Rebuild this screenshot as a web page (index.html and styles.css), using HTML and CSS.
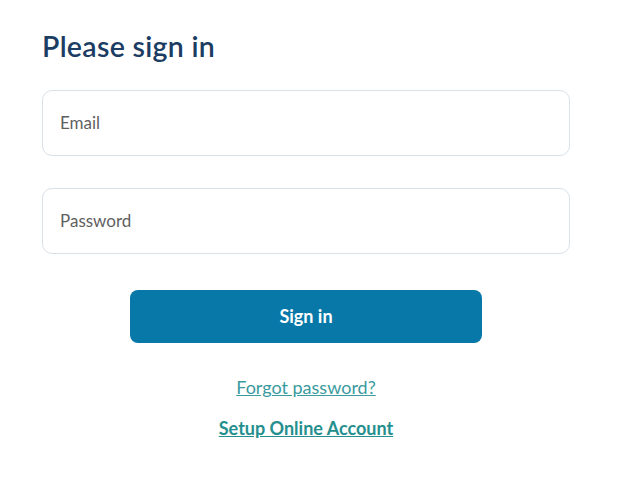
FILE: index.html
```html
<!DOCTYPE html>
<html lang="en">
<head>
<meta charset="utf-8">
<title>Sign in</title>
<link rel="stylesheet" href="styles.css">
</head>
<body>
<main class="signin">
  <h1 class="title">Please sign in</h1>
  <form class="form">
    <div class="field"><input class="input" type="email" placeholder="Email"></div>
    <div class="field"><input class="input" type="password" placeholder="Password"></div>
    <button class="btn" type="button">Sign in</button>
    <a class="link" href="#">Forgot password?</a>
    <a class="link link-bold" href="#">Setup Online Account</a>
  </form>
</main>
</body>
</html>
```
FILE: styles.css
```css
html, body {
  margin: 0;
  padding: 0;
  background: #ffffff;
}
body {
  font-family: Lato, "Open Sans", sans-serif;
}
.signin {
  width: 528px;
  padding: 29px 0 0 42px;
}
.title {
  margin: 0;
  font-size: 28.5px;
  font-weight: 600;
  color: #1b3c63;
  line-height: 34px;
  letter-spacing: 0.3px;
}
.form {
  display: flex;
  flex-direction: column;
  align-items: center;
  margin-top: 27px;
}
.field {
  width: 100%;
  margin-bottom: 32px;
}
.input {
  box-sizing: border-box;
  width: 100%;
  height: 66px;
  border: 1px solid #d9e1ea;
  border-radius: 10px;
  padding: 0 17px 1px;
  font-family: inherit;
  font-size: 17px;
  color: #333;
  outline: none;
}
.input::placeholder {
  color: #5f5f5f;
}
.btn {
  width: 352px;
  height: 53px;
  margin-top: 4px;
  padding-bottom: 2px;
  border: none;
  border-radius: 8px;
  background: #0778a8;
  color: #ffffff;
  font-family: inherit;
  font-size: 18px;
  font-weight: 700;
  cursor: pointer;
}
.link {
  margin-top: 33px;
  font-size: 18px;
  color: #3a9a9e;
  text-decoration: underline;
  line-height: 22px;
}
.link-bold {
  margin-top: 19px;
  font-size: 18px;
  font-weight: 700;
  color: #258f8e;
}
```
